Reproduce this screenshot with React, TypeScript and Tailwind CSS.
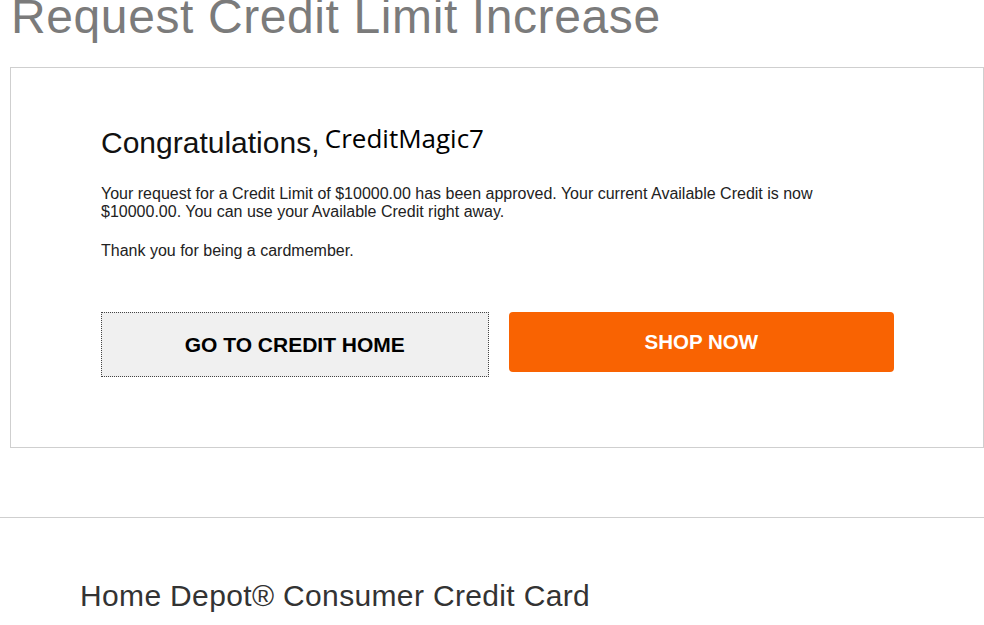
import React from 'react';

const amount = '$10000.00';

export default function App() {
  return (
    <div className="min-h-[625px] w-full overflow-hidden bg-white font-['Liberation_Sans',Arial,sans-serif]">
      <header className="h-[67px] overflow-hidden">
        <h1 className="-mt-[7px] pl-[11px] text-[48px] leading-none font-normal tracking-[0.6px] text-[#7b7b7b]">
          Request Credit Limit Increase
        </h1>
      </header>

      <section className="ml-[10px] border border-[#cfcfcf] pt-[57px] pr-[89px] pb-[70px] pl-[90px]">
        <h2 className="text-[30px] leading-[36px] font-normal text-[#111]">
          Congratulations,{' '}
          <span className="-ml-[3px] align-[5px] font-['Open_Sans',sans-serif] text-[26px] leading-[20px] text-black">
            CreditMagic7
          </span>
        </h2>
        <p className="mt-[24px] max-w-[730px] text-[16px] leading-[18px] text-[#222]">
          Your request for a Credit Limit of {amount} has been approved. Your current Available Credit is now {amount}.
          You can use your Available Credit right away.
        </p>
        <p className="mt-[21px] text-[16px] leading-[18px] text-[#222]">Thank you for being a cardmember.</p>

        <div className="mt-[52px] flex items-start gap-[20px]">
          <button className="h-[65px] w-[388px] border border-dotted border-[#444] bg-[#f0f0f0] text-[21px] font-bold text-black">
            GO TO CREDIT HOME
          </button>
          <button className="h-[60px] w-[386px] rounded-[4px] bg-[#f96302] text-[20.5px] font-bold text-white">
            SHOP NOW
          </button>
        </div>
      </section>

      <hr className="mt-[69px] border-0 border-t border-[#cfcfcf]" />

      <h3 className="mt-[60px] pl-[80px] text-[30px] leading-[36px] font-normal tracking-[0.35px] text-[#333]">
        Home Depot® Consumer Credit Card
      </h3>
    </div>
  );
}
